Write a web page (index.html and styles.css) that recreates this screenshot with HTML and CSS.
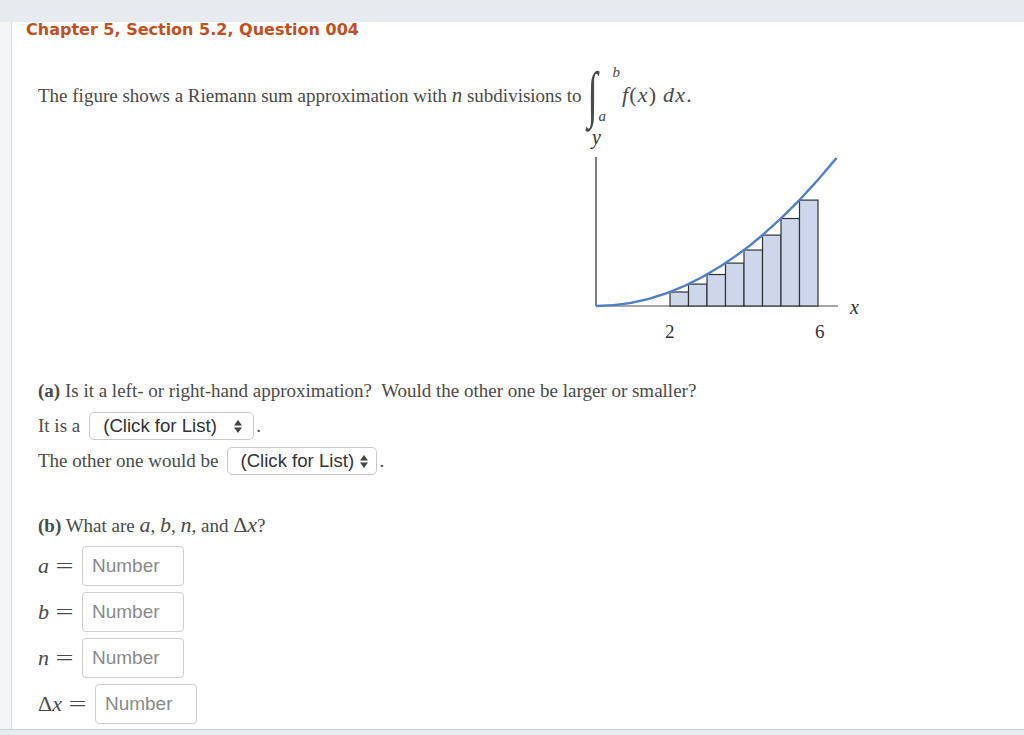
FILE: index.html
```html
<!DOCTYPE html>
<html>
<head>
<meta charset="utf-8">
<link rel="stylesheet" href="styles.css">
</head>
<body>
<div class="frame">
  <div class="strip"></div>
  <div class="page">
    <h1 class="title">Chapter 5, Section 5.2, Question 004</h1>
    <div class="intro">
      <span>The figure shows a Riemann sum approximation with <i class="m mn">n</i> subdivisions to</span>
      <span class="int">
        <span class="int-sign">∫</span>
        <span class="limits"><i class="m lim lim-b">b</i><i class="m lim lim-a">a</i></span>
      </span>
      <span class="integrand"><i class="m">f</i>(<i class="m">x</i>)&thinsp;<i class="m">dx</i>.</span>
    </div>
    <svg class="figure" width="300" height="218" viewBox="0 0 300 218">
      <text x="12" y="18" class="lbl">y</text>
      <line x1="16" y1="31" x2="16" y2="180" stroke="#555" stroke-width="1.5"/>
      <line x1="16" y1="180" x2="258" y2="180" stroke="#8a8a8a" stroke-width="1.5"/>
      <g fill="#cdd6eb" stroke="#333" stroke-width="1.2">
        <rect x="90" y="166" width="18.5" height="14"/>
        <rect x="108.5" y="158.1" width="18.5" height="21.9"/>
        <rect x="127" y="148.5" width="18.5" height="31.5"/>
        <rect x="145.5" y="137.1" width="18.5" height="42.9"/>
        <rect x="164" y="124" width="18.5" height="56"/>
        <rect x="182.5" y="109.1" width="18.5" height="70.9"/>
        <rect x="201" y="92.5" width="18.5" height="87.5"/>
        <rect x="219.5" y="74.1" width="18.5" height="105.9"/>
      </g>
      <path d="M16,180 Q136.25,180 256.5,32.1" fill="none" stroke="#4f80c6" stroke-width="2.4"/>
      <text x="270" y="188" class="lbl">x</text>
      <text x="85" y="212" class="num">2</text>
      <text x="235" y="212" class="num">6</text>
    </svg>
    <div class="qa">
      <p class="line"><b>(a)</b> Is it a left- or right-hand approximation?&nbsp; Would the other one be larger or smaller?</p>
      <div class="row">
        <span>It is a</span>
        <span class="select w1">(Click for List)<svg class="arr" width="8" height="13" viewBox="0 0 8 13"><path d="M4 0 L8 5.5 L0 5.5 Z M0 7.5 L8 7.5 L4 13 Z" fill="#444"/></svg></span><span class="dot">.</span>
      </div>
      <div class="row r2">
        <span>The other one would be</span>
        <span class="select w2">(Click for List)<svg class="arr" width="8" height="13" viewBox="0 0 8 13"><path d="M4 0 L8 5.5 L0 5.5 Z M0 7.5 L8 7.5 L4 13 Z" fill="#444"/></svg></span><span class="dot">.</span>
      </div>
      <p class="line b"><b>(b)</b> What are <i class="m big">a</i>, <i class="m big">b</i>, <i class="m big">n</i>, and <span class="big">Δ</span><i class="m big">x</i>?</p>
      <div class="field first"><span class="lab"><i class="m big">a</i><span class="eq">=</span></span><span class="input">Number</span></div>
      <div class="field"><span class="lab"><i class="m big">b</i><span class="eq">=</span></span><span class="input">Number</span></div>
      <div class="field"><span class="lab"><i class="m big">n</i><span class="eq">=</span></span><span class="input">Number</span></div>
      <div class="field"><span class="lab"><span class="big">Δ</span><i class="m big">x</i><span class="eq">=</span></span><span class="input">Number</span></div>
    </div>
  </div>
</div>
</body>
</html>
```

FILE: styles.css
```css
html, body {
  margin: 0;
  padding: 0;
}
body {
  width: 1024px;
  height: 735px;
  overflow: hidden;
  background: #e7eaee;
  font-family: "Liberation Serif", "Times New Roman", serif;
  color: #4a4a4a;
}
.frame {
  margin-top: 22px;
  height: 707px;
  display: flex;
  border-bottom: 1px solid #cdd2d9;
}
.strip {
  width: 11px;
  background: #f4f5f7;
  border-right: 1px solid #d6dae0;
}
.page {
  flex: 1;
  background: #fff;
  padding-left: 26px;
}
.title {
  margin: 0 0 0 -12px;
  font-family: "DejaVu Sans", Verdana, sans-serif;
  font-weight: bold;
  font-size: 16px;
  line-height: 16px;
  color: #c44f20;
}
.intro {
  display: flex;
  align-items: center;
  font-size: 19px;
  margin-top: 26px;
  height: 62px;
}
.m {
  font-style: italic;
}
.mn {
  font-size: 21px;
}
.int {
  display: inline-flex;
  align-items: stretch;
  height: 62px;
  margin-left: 4px;
}
.int-sign {
  font-size: 62px;
  line-height: 60px;
  font-style: italic;
  transform: scaleX(0.6);
  margin: 0 -4px 0 -2px;
}
.limits {
  display: flex;
  flex-direction: column;
  justify-content: space-between;
  font-size: 15px;
  line-height: 16px;
  padding: 0 0 2px;
}
.lim {
  display: block;
}
.lim-b {
  margin-left: 16px;
}
.lim-a {
  margin-left: 2px;
}
.integrand {
  font-size: 22px;
  margin-left: 2px;
  letter-spacing: 1.2px;
}
.figure {
  display: block;
  margin-left: 542px;
  margin-top: 0;
}
.lbl {
  font-family: "Liberation Serif", serif;
  font-style: italic;
  font-size: 20px;
  fill: #333;
}
.num {
  font-family: "Liberation Serif", serif;
  font-size: 19px;
  fill: #333;
}
.qa {
  margin-top: 35px;
  font-size: 19px;
}
.line {
  margin: 0;
  line-height: 24px;
  height: 24px;
}
.line b {
  font-weight: bold;
}
.line.b {
  margin-top: 38px;
}
.big {
  font-size: 22px;
}
.row {
  display: flex;
  align-items: center;
  height: 28px;
  margin-top: 9px;
}
.row.r2 {
  margin-top: 7px;
}
.select {
  box-sizing: border-box;
  display: inline-flex;
  align-items: center;
  justify-content: space-between;
  height: 28px;
  margin-left: 9px;
  padding: 0 11px 0 13px;
  border: 1px solid #cbcbcb;
  border-radius: 5px;
  font-family: "Liberation Sans", Arial, sans-serif;
  font-size: 18.6px;
  color: #333;
  background: #fff;
  white-space: nowrap;
}
.w1 { width: 165px; }
.w2 { width: 150px; padding: 0 8px 0 12px; }
.arr {
  display: block;
  flex: none;
}
.dot {
  margin-left: 2px;
}
.field {
  display: flex;
  align-items: center;
  height: 40px;
  margin-top: 6px;
}
.field.first {
  margin-top: 9px;
}
.lab {
  display: flex;
  align-items: center;
  margin-right: 8px;
}
.eq {
  display: inline-block;
  font-size: 22px;
  width: 19px;
  margin-left: 6px;
  text-align: center;
  transform: scaleX(1.45);
}
.input {
  box-sizing: border-box;
  width: 102px;
  height: 40px;
  display: flex;
  align-items: center;
  padding-left: 9px;
  border: 1px solid #cfcfcf;
  border-radius: 4px;
  font-family: "Liberation Sans", Arial, sans-serif;
  font-size: 19px;
  color: #8a8a8a;
}
```
